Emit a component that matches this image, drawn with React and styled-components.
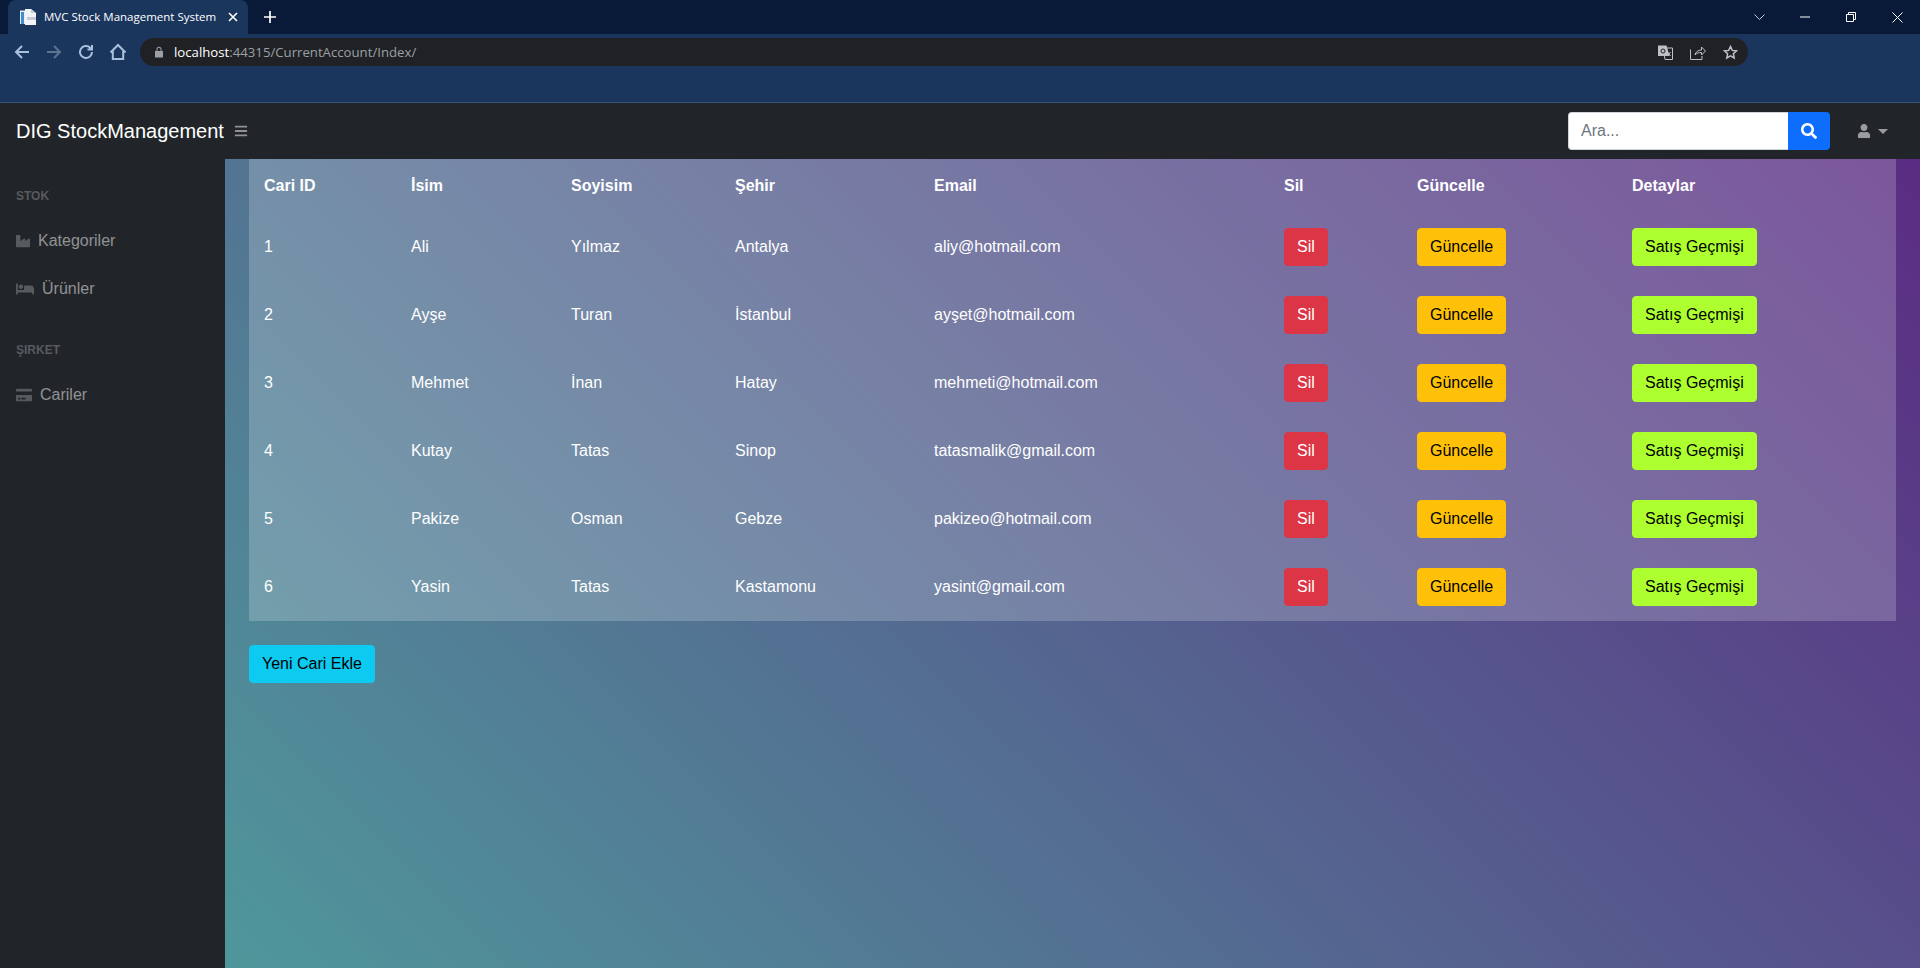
import React from 'react'
import styled, { createGlobalStyle } from 'styled-components'
import { FaBars, FaBed, FaCreditCard, FaIndustry, FaSearch, FaUser } from 'react-icons/fa'

const GlobalStyle = createGlobalStyle`
  html, body, #root { margin: 0; height: 100%; }
  body { overflow: hidden; font-family: "Liberation Sans", Arial, sans-serif; font-size: 16px; line-height: 1.5; }
  * { box-sizing: border-box; }
`

const Page = styled.div`
  height: 968px;
  display: flex;
  flex-direction: column;
`

/* browser window */
const TitleBar = styled.div`
  height: 34px;
  padding-left: 8px;
  background: #081a38;
  display: flex;
  align-items: flex-end;
`

const Tab = styled.div`
  width: 240px;
  height: 34px;
  padding: 0 10px 0 12px;
  background: #1a365d;
  border-radius: 8px 8px 0 0;
  color: #fff;
  display: flex;
  align-items: center;
  gap: 8px;
  font-family: "Open Sans", sans-serif;
  font-size: 11.5px;
  white-space: nowrap;
`

const TabTitle = styled.span`
  flex: 1;
`

const NewTab = styled.div`
  margin-left: 16px;
  height: 34px;
  display: flex;
  align-items: center;
`

const WindowControls = styled.div`
  margin-left: auto;
  height: 34px;
  display: flex;
  align-items: center;
`

const WindowButton = styled.div`
  width: 46px;
  display: flex;
  justify-content: center;
  color: #fff;
`

const Toolbar = styled.div`
  height: 69px;
  padding: 4px 172px 0 0;
  background: #1a365d;
  border-bottom: 1px solid #34527a;
  display: flex;
  align-items: flex-start;
`

const NavGroup = styled.div`
  width: 140px;
  height: 28px;
  padding-left: 13px;
  display: flex;
  align-items: center;
  gap: 14px;
`

const NavIcon = styled.svg`
  width: 18px;
  height: 18px;
  flex: none;
  fill: none;
  stroke: ${p => (p.$dim ? '#5b7393' : '#a9c0dc')};
  stroke-width: 2;
`

const Address = styled.div`
  flex: 1;
  height: 28px;
  padding: 0 10px 0 14px;
  border-radius: 14px;
  background: #202124;
  display: flex;
  align-items: center;
  font-family: "Open Sans", sans-serif;
  font-size: 13.2px;
  color: #9aa0a6;
`

const Url = styled.span`
  margin: 1px 0 0 10px;
`

const Host = styled.span`
  color: #fff;
`

const AddressTools = styled.div`
  margin-left: auto;
  display: flex;
  align-items: center;
  gap: 17px;
  color: #bdc1c6;
`

/* app navbar */
const TopNav = styled.nav`
  height: 56px;
  padding: 0 16px;
  background: #212529;
  display: flex;
  align-items: center;
`

const Brand = styled.a`
  font-size: 20px;
  color: #fff;
`

const MenuToggle = styled.span`
  margin-left: 10px;
  display: flex;
  font-size: 14px;
  color: rgba(255, 255, 255, 0.5);
`

const SearchGroup = styled.form`
  margin-left: auto;
  width: 262px;
  height: 38px;
  display: flex;
`

const SearchInput = styled.input`
  flex: 1;
  min-width: 0;
  padding: 6px 12px;
  border: 1px solid #ced4da;
  border-right: 0;
  border-radius: 4px 0 0 4px;
  background: #fff;
  font: inherit;
  &::placeholder { color: #6c757d; }
`

const SearchButton = styled.button`
  width: 42px;
  border: 0;
  border-radius: 0 4px 4px 0;
  background: #0d6efd;
  color: #fff;
  display: flex;
  align-items: center;
  justify-content: center;
  font-size: 16px;
`

const UserMenu = styled.div`
  margin: 0 16px 0 27px;
  display: flex;
  align-items: center;
  gap: 7px;
  font-size: 14px;
  color: rgba(255, 255, 255, 0.55);
`

const Caret = styled.span`
  border-top: 5px solid rgba(255, 255, 255, 0.55);
  border-left: 5px solid transparent;
  border-right: 5px solid transparent;
`

/* sidebar */
const Body = styled.div`
  flex: 1;
  min-height: 0;
  display: flex;
`

const Sidebar = styled.aside`
  width: 225px;
  flex: none;
  background: #212529;
`

const Heading = styled.div`
  padding: 28px 16px 12px;
  font-size: 12px;
  font-weight: 700;
  line-height: 18px;
  text-transform: uppercase;
  color: rgba(255, 255, 255, 0.25);
`

const SideLink = styled.a`
  height: 48px;
  padding: 0 16px;
  display: flex;
  align-items: center;
  gap: 8px;
  color: rgba(255, 255, 255, 0.5);
  svg { color: rgba(255, 255, 255, 0.25); font-size: ${p => p.$icon || 16}px; }
`

/* content */
const Main = styled.main`
  flex: 1;
  min-width: 0;
  padding: 0 24px;
  background: linear-gradient(45deg, #4f979b, #5b2c83);
`

const Table = styled.table`
  width: 100%;
  table-layout: fixed;
  border-collapse: collapse;
  background: rgba(255, 255, 255, 0.2);
  color: #fff;
`

const Col = styled.col`
  width: ${p => p.$w}px;
`

const Th = styled.th`
  padding: 15px;
  text-align: left;
  font-weight: 700;
`

const Td = styled.td`
  padding: 15px;
  vertical-align: middle;
`

const Button = styled.a`
  display: inline-block;
  padding: 6px 12px;
  border: 1px solid ${p => p.$bg};
  border-radius: 4px;
  line-height: 24px;
  background: ${p => p.$bg};
  color: ${p => p.$fg || '#000'};
`

const AddRow = styled.div`
  margin-top: 24px;
`

const columns = [147, 160, 164, 199, 350, 133, 215, 279]
const heads = ['Cari ID', 'İsim', 'Soyisim', 'Şehir', 'Email', 'Sil', 'Güncelle', 'Detaylar']
const rows = [
  [1, 'Ali', 'Yılmaz', 'Antalya', 'aliy@hotmail.com'],
  [2, 'Ayşe', 'Turan', 'İstanbul', 'ayşet@hotmail.com'],
  [3, 'Mehmet', 'İnan', 'Hatay', 'mehmeti@hotmail.com'],
  [4, 'Kutay', 'Tatas', 'Sinop', 'tatasmalik@gmail.com'],
  [5, 'Pakize', 'Osman', 'Gebze', 'pakizeo@hotmail.com'],
  [6, 'Yasin', 'Tatas', 'Kastamonu', 'yasint@gmail.com'],
]

const Favicon = () => (
  <svg width="16" height="16" viewBox="0 0 16 16">
    <path d="M0 1.500h5v13.500H0z" fill="#e8eef5" />
    <path d="M1 3h3v12H1z" fill="#3f8fd0" />
    <path d="M5 0h6l5 4v12H5z" fill="#f2f4f7" />
    <path d="M7 8h9v3H7z" fill="#c5ccd6" />
    <path d="M11 0l5 4h-5z" fill="#c5ccd6" />
  </svg>
)

const App = () => (
  <Page>
    <GlobalStyle />
    <TitleBar>
      <Tab>
        <Favicon />
        <TabTitle>MVC Stock Management System</TabTitle>
        <svg width="10" height="10" viewBox="0 0 10 10" stroke="#fff" strokeWidth="1.6">
          <path d="M1 1l8 8M9 1l-8 8" />
        </svg>
      </Tab>
      <NewTab>
        <svg width="12" height="12" viewBox="0 0 12 12" stroke="#fff" strokeWidth="1.7">
          <path d="M6 0v12M0 6h12" />
        </svg>
      </NewTab>
      <WindowControls>
        <WindowButton>
          <svg width="11" height="7" viewBox="0 0 11 7" fill="none" stroke="#c4ccd8"><path d="M.5.5l5 5 5-5" /></svg>
        </WindowButton>
        <WindowButton>
          <svg width="10" height="2" viewBox="0 0 10 2" stroke="#fff"><path d="M0 1h10" /></svg>
        </WindowButton>
        <WindowButton>
          <svg width="10" height="10" viewBox="0 0 10 10" fill="none" stroke="#fff">
            <path d="M.5 2.500h7v7h-7zM2.500 2.500v-2h7v7h-2" />
          </svg>
        </WindowButton>
        <WindowButton>
          <svg width="11" height="11" viewBox="0 0 11 11" stroke="#fff"><path d="M.5.5l10 10M10.500.5l-10 10" /></svg>
        </WindowButton>
      </WindowControls>
    </TitleBar>
    <Toolbar>
      <NavGroup>
        <NavIcon viewBox="0 0 18 18"><path d="M16 9H3M9 3L3 9l6 6" /></NavIcon>
        <NavIcon $dim viewBox="0 0 18 18"><path d="M2 9h13M9 3l6 6-6 6" /></NavIcon>
        <NavIcon viewBox="0 0 18 18"><path d="M15 9a6 6 0 1 1-1.800-4.300L15 6.500M15 2v4.500h-4.500" /></NavIcon>
        <NavIcon viewBox="0 0 18 18"><path d="M1.500 9.500L9 2l7.500 7.500M3.800 8v8h10.400V8" /></NavIcon>
      </NavGroup>
      <Address>
        <svg width="10" height="12" viewBox="0 0 10 12" fill="#9aa0a6">
          <path d="M1 5h8v6.500H1zM2.500 5V3.200a2.500 2.500 0 0 1 5 0V5H6.500V3.200a1.500 1.500 0 0 0-3 0V5z" />
        </svg>
        <Url><Host>localhost</Host>:44315/CurrentAccount/Index/</Url>
        <AddressTools>
          <svg width="15" height="15" viewBox="0 0 15 15">
            <path d="M5 3h9.500v11.500H7z" fill="none" stroke="currentColor" />
            <path d="M0 .5h8.500l3 10.500H0z" fill="#bdc1c6" />
            <circle cx="5" cy="6" r="2" fill="none" stroke="#202124" />
            <path d="M9.500 7l3 4M12.500 7l-3 4" stroke="currentColor" />
          </svg>
          <svg width="16" height="15" viewBox="0 0 16 15" fill="none" stroke="currentColor">
            <path d="M.5 4.500v10h11.500V11M5 10c.5-3 3-5 6.500-5V2l4 4-4 4V7.500C9 7.500 6.500 8 5 10z" />
          </svg>
          <svg width="15" height="15" viewBox="0 0 15 15" fill="none" stroke="currentColor" strokeWidth="1.500">
            <path d="M7.500 1.500l1.800 3.900 4.200.5-3.100 2.900.8 4.200-3.700-2.100-3.700 2.100.8-4.200L1.500 5.900l4.200-.5z" />
          </svg>
        </AddressTools>
      </Address>
    </Toolbar>
    <TopNav>
      <Brand>DIG StockManagement</Brand>
      <MenuToggle><FaBars /></MenuToggle>
      <SearchGroup>
        <SearchInput placeholder="Ara..." />
        <SearchButton type="button"><FaSearch /></SearchButton>
      </SearchGroup>
      <UserMenu><FaUser /><Caret /></UserMenu>
    </TopNav>
    <Body>
      <Sidebar>
        <Heading>Stok</Heading>
        <SideLink $icon={14}><FaIndustry />Kategoriler</SideLink>
        <SideLink $icon={18}><FaBed />Ürünler</SideLink>
        <Heading>Şirket</Heading>
        <SideLink><FaCreditCard />Cariler</SideLink>
      </Sidebar>
      <Main>
        <Table>
          <colgroup>
            {columns.map((w, i) => <Col key={i} $w={w} />)}
          </colgroup>
          <thead>
            <tr>{heads.map(h => <Th key={h}>{h}</Th>)}</tr>
          </thead>
          <tbody>
            {rows.map(r => (
              <tr key={r[0]}>
                {r.map((v, i) => <Td key={i}>{v}</Td>)}
                <Td><Button $bg="#dc3545" $fg="#fff">Sil</Button></Td>
                <Td><Button $bg="#ffc107">Güncelle</Button></Td>
                <Td><Button $bg="#adff2f">Satış Geçmişi</Button></Td>
              </tr>
            ))}
          </tbody>
        </Table>
        <AddRow><Button $bg="#0dcaf0">Yeni Cari Ekle</Button></AddRow>
      </Main>
    </Body>
  </Page>
)

export default App
